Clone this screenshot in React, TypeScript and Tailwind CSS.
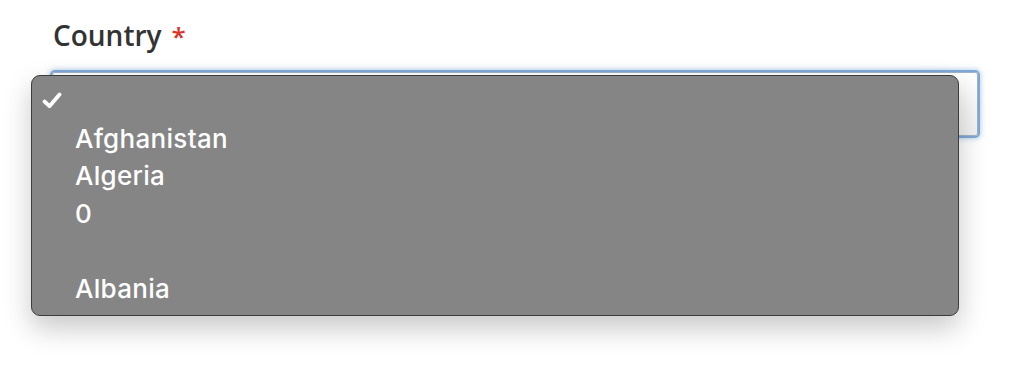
const options = ['', 'Afghanistan', 'Algeria', '0', '', 'Albania']

function CheckMark() {
  return (
    <svg width="20" height="17" viewBox="0 0 20 17" fill="none" className="block">
      <path d="M2.5 9.5 L7.5 14.2 L17.5 2.5" stroke="white" strokeWidth="3.8" strokeLinecap="round" strokeLinejoin="round" />
    </svg>
  )
}

export default function App() {
  return (
    <div className="relative w-[1026px] h-[372px] bg-white overflow-hidden">
      <div className="pl-[53px] pt-[19px]">
        <div className="text-[28px] leading-[32px] font-semibold text-[#333333]" style={{ fontFamily: '"Open Sans", "Noto Sans", sans-serif' }}>
          Country<span className="ml-[10px] text-[26px] text-[#d9342b]">*</span>
        </div>
      </div>
      <div className="ml-[52px] mt-[20px] w-[926px] h-[64px] rounded-[3px] border border-[#9fb3c8] bg-gradient-to-b from-white to-[#f1f1f1] shadow-[0_0_0_2px_#7fa9d4,0_0_5px_3px_rgba(110,160,210,0.45)]" />

      {/* native select popup */}
      <div
        className="absolute left-[31px] top-[75px] w-[928px] rounded-[9px] border border-[#3c3c3c] bg-[#858585] pt-[6px] pb-[8px] shadow-[0_12px_28px_rgba(0,0,0,0.22)]"
        style={{ fontFamily: 'Inter, "Liberation Sans", sans-serif' }}
      >
        {options.map((opt, i) => (
          <div key={i} className="flex items-center h-[37.5px] text-[26px] leading-[37.5px] font-medium tracking-[0.3px] text-white">
            <div className="w-[43px] shrink-0 pl-[10px] flex items-center">
              {i === 0 && <CheckMark />}
            </div>
            <span>{opt}</span>
          </div>
        ))}
      </div>
    </div>
  )
}
